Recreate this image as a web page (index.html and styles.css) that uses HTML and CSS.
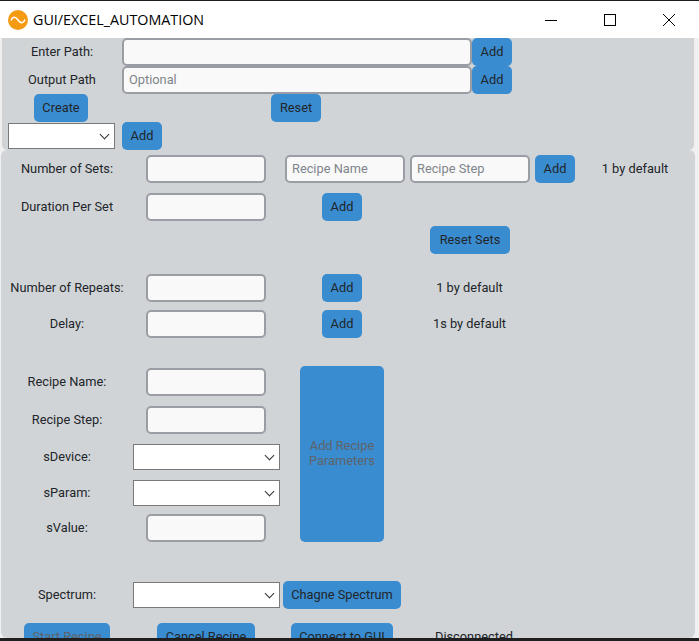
FILE: index.html
```html
<!DOCTYPE html>
<html lang="en">
<head>
<meta charset="utf-8">
<title>GUI/EXCEL_AUTOMATION</title>
<link rel="stylesheet" href="styles.css">
</head>
<body>
<div class="window">
  <header class="titlebar">
    <svg class="app-icon" width="20" height="20" viewBox="0 0 20 20"><circle cx="10" cy="10" r="10" fill="#f59a13"/><path d="M3 10.500C4.500 6.500 7 6 10 10s5.500 3.500 7-.5" fill="none" stroke="#fff" stroke-width="1.500"/></svg>
    <span class="title">GUI/EXCEL_AUTOMATION</span>
    <div class="controls">
      <svg width="14" height="14" viewBox="0 0 14 14"><path d="M1 7.500h12" stroke="#000" fill="none"/></svg>
      <svg width="14" height="14" viewBox="0 0 14 14"><rect x="1.500" y="1.500" width="11" height="11" stroke="#000" fill="none"/></svg>
      <svg width="14" height="14" viewBox="0 0 14 14"><path d="M1 1l12 12M13 1L1 13" stroke="#000" fill="none"/></svg>
    </div>
  </header>
  <div class="client">
    <section class="panel top">
      <div class="row h28">
        <label class="lbl w-top">Enter Path:</label>
        <input class="field path">
        <button class="btn add">Add</button>
      </div>
      <div class="row h28">
        <label class="lbl w-top">Output Path</label>
        <input class="field path" placeholder="Optional">
        <button class="btn add">Add</button>
      </div>
      <div class="row h28">
        <button class="btn create">Create</button>
        <button class="btn reset">Reset</button>
      </div>
      <div class="row h28">
        <div class="select s-top"></div>
        <button class="btn add add-top">Add</button>
      </div>
    </section>
    <section class="panel main">
      <div class="row h28 sets">
        <label class="lbl w-main">Number of Sets:</label>
        <input class="field num">
        <input class="field small first" placeholder="Recipe Name">
        <input class="field small next" placeholder="Recipe Step">
        <button class="btn add next">Add</button>
        <span class="note note-sets">1 by default</span>
      </div>
      <div class="row h28 dur">
        <label class="lbl w-main">Duration Per Set</label>
        <input class="field num">
        <button class="btn add mid">Add</button>
      </div>
      <div class="row h28 resetsets">
        <button class="btn rsets">Reset Sets</button>
      </div>
      <div class="row h28 repeats">
        <label class="lbl w-main">Number of Repeats:</label>
        <input class="field num">
        <button class="btn add mid">Add</button>
        <span class="note note-mid">1 by default</span>
      </div>
      <div class="row h28 delay">
        <label class="lbl w-main">Delay:</label>
        <input class="field num">
        <button class="btn add mid">Add</button>
        <span class="note note-mid">1s by default</span>
      </div>
      <div class="recipe">
        <div class="recipe-col">
          <div class="row h28"><label class="lbl w-rec">Recipe Name:</label><input class="field num"></div>
          <div class="row h28"><label class="lbl w-rec">Recipe Step:</label><input class="field num"></div>
          <div class="row h26"><label class="lbl w-sel">sDevice:</label><div class="select s-main"></div></div>
          <div class="row h26"><label class="lbl w-sel">sParam:</label><div class="select s-main"></div></div>
          <div class="row h28 last"><label class="lbl w-rec">sValue:</label><input class="field num"></div>
        </div>
        <button class="btn big">Add Recipe<br>Parameters</button>
      </div>
      <div class="row h28 spectrum">
        <label class="lbl w-sel">Spectrum:</label>
        <div class="select s-main"></div>
        <button class="btn chagne">Chagne Spectrum</button>
      </div>
      <div class="row h28 actions">
        <button class="btn start">Start Recipe</button>
        <button class="btn cancel">Cancel Recipe</button>
        <button class="btn connect">Connect to GUI</button>
        <span class="note status">Disconnected</span>
      </div>
    </section>
  </div>
</div>
</body>
</html>
```
FILE: styles.css
```css
* { box-sizing: border-box; }
html, body { margin: 0; height: 100%; overflow: hidden; background: #f0f0f0; }
body { font-family: Roboto, "Liberation Sans", sans-serif; font-size: 12.8px; line-height: 14px; color: #212529; }
.window { width: 699px; height: 641px; display: flex; flex-direction: column; border-top: 1px solid #1f1f1f; border-bottom: 3px solid #1f1f1f; overflow: hidden; }
.titlebar { flex: none; height: 37px; background: #fff; display: flex; align-items: center; padding: 0 0 0 8px; color: #000; }
.app-icon { flex: none; }
.title { margin-left: 5px; font-family: "Open Sans", "Noto Sans", sans-serif; font-size: 14.3px; }
.controls { margin-left: auto; display: flex; gap: 45px; padding-right: 23px; align-items: center; height: 100%; }
.client { flex: 1; background: #f0f0f0; display: flex; flex-direction: column; min-height: 0; }
.panel { background: #d1d4d7; width: 694px; border-radius: 0 0 5px 5px; }
.panel.top { height: 112px; margin-left: 2px; width: 692px; }
.panel.main { flex: 1; border-radius: 6px; padding-top: 5px; min-height: 0; overflow: hidden; margin-left: 1px; }
.row { display: flex; align-items: center; }
.h28 { height: 28px; flex: none; }
.h26 { height: 26px; flex: none; }
.last { margin-top: -2px; }
.lbl { text-align: center; flex: none; }
.w-top { width: 120px; }
.w-main { width: 132px; margin-right: 14px; }
.w-rec { width: 132px; margin-right: 14px; }
.w-sel { width: 132px; }
.field { height: 28px; flex: none; background: #f9f9f9; border: 2px solid #9a9da3; border-radius: 5px; padding: 0 5px 2px; font: inherit; color: #212529; outline: none; }
.field::placeholder { color: #7f858b; opacity: 1; }
.path { width: 350px; }
.num { width: 120px; margin-left: -1px; }
.small { width: 120px; }
.field.first { margin-left: 19px; }
.field.next, .btn.next { margin-left: 5px; }
.btn { height: 28px; flex: none; border: none; background: #3a8cd0; color: #212529; border-radius: 5px; font: inherit; padding: 0; text-align: center; }
.add { width: 40px; }
.create { width: 54px; margin-left: 32px; }
.reset { width: 50px; margin-left: 183px; }
.select { height: 26px; background: #fff; border: 1px solid #7a7a7a; position: relative; flex: none; }
.select::after { content: ""; position: absolute; right: 6.500px; top: 7px; width: 6px; height: 6px; border-right: 1px solid #333; border-bottom: 1px solid #333; transform: rotate(45deg); }
.s-top { width: 107px; margin-left: 6px; }
.add-top { margin-left: 7px; }
.s-main { width: 147px; }
.note { flex: none; text-align: center; }
.note-sets { width: 100px; margin-left: 10px; }
.mid { margin-left: 56px; }
.note-mid { width: 90px; margin-left: 62.500px; }
.dur { margin-top: 10px; }
.resetsets { margin-top: 5px; padding-left: 429px; }
.rsets { width: 80px; }
.repeats { margin-top: 20px; }
.delay { margin-top: 8px; }
.recipe { display: flex; margin-top: 28px; height: 176px; }
.recipe-col { width: 299px; flex: none; display: flex; flex-direction: column; gap: 10px; padding-top: 2px; }
.big { width: 84px; height: 176px; color: #5f6368; line-height: 15px; padding-bottom: 2px; }
.spectrum { margin-top: 39px; }
.chagne { width: 118px; margin-left: 3px; }
.actions { margin-top: 14px; }
.start { width: 86px; margin-left: 23px; color: #5f6368; }
.cancel { width: 98px; margin-left: 47px; }
.connect { width: 102px; margin-left: 36px; }
.status { margin-left: 42px; }
```
